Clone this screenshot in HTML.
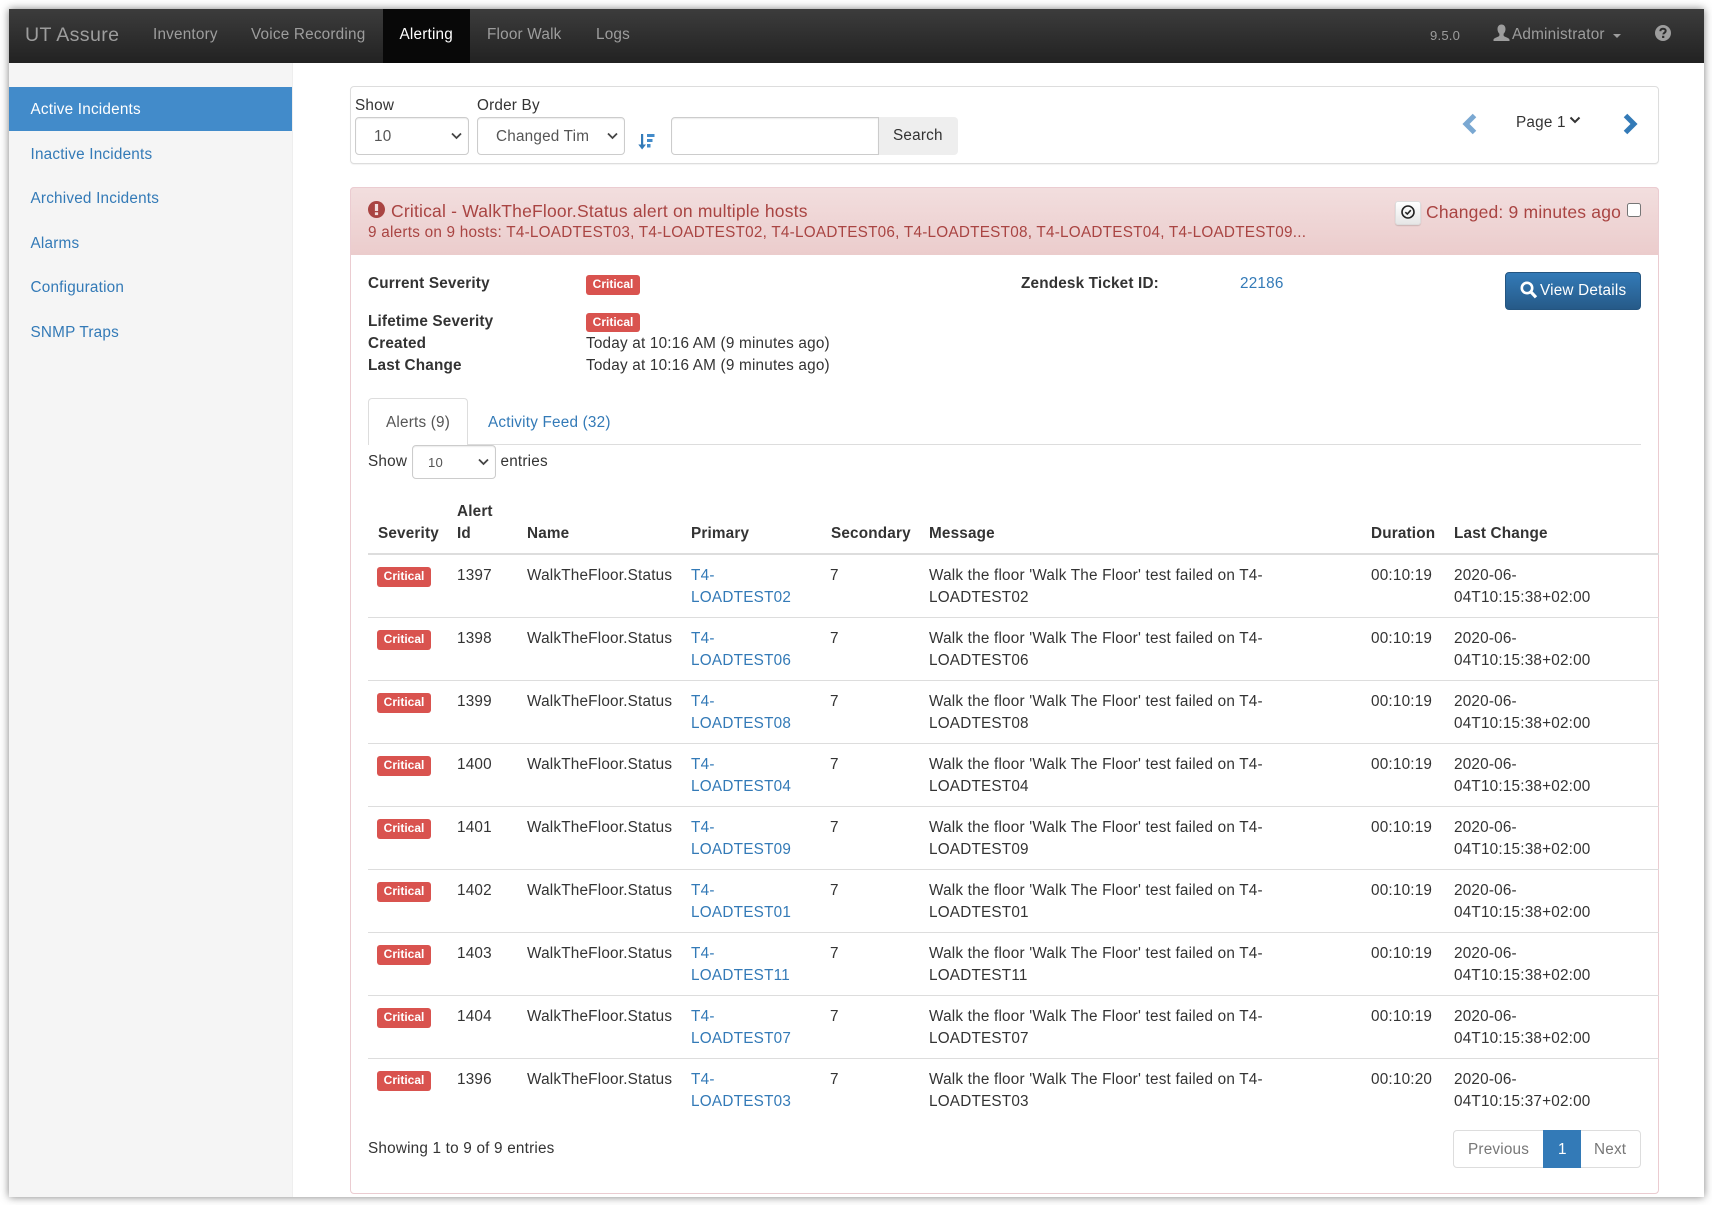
<!DOCTYPE html>
<html lang="en">
<head>
<meta charset="utf-8">
<title>UT Assure</title>
<style>
html,body{margin:0;padding:0;width:1712px;height:1205px;overflow:hidden;background:#fff;}
body{font-family:"Liberation Sans",Arial,sans-serif;font-size:15.3px;letter-spacing:.2px;color:#333;position:relative;}
*{box-sizing:border-box;}
.a,.t{position:absolute;}
.t{white-space:nowrap;line-height:22px;}
a{color:#337ab7;text-decoration:none;}
#app{position:absolute;left:9px;top:9px;width:1695px;height:1188px;background:#fff;box-shadow:0 0 8px rgba(0,0,0,.5);}
#nav{position:absolute;left:9px;top:9px;width:1695px;height:54px;background:linear-gradient(#3c3c3c,#222);}
.n{color:#9d9d9d;top:24px;}
#side{position:absolute;left:9px;top:63px;width:284px;height:1134px;background:#f5f5f5;border-right:1px solid #eee;}
.s{left:30.5px;color:#337ab7;}
.pn{position:absolute;left:350px;top:86px;width:1309px;height:78px;border:1px solid #ddd;border-radius:4px;box-shadow:0 1px 1px rgba(0,0,0,.05);background:#fff;}
select{position:absolute;font-family:"Liberation Sans",Arial,sans-serif;font-size:15.3px;letter-spacing:.2px;color:#555;background:#fff;border:1px solid #ccc;border-radius:4px;margin:0;box-shadow:inset 0 1px 1px rgba(0,0,0,.075);-webkit-appearance:none;appearance:none;}
.chev{position:absolute;pointer-events:none;}
input[type=text]{position:absolute;left:671px;top:117px;width:208px;height:38px;border:1px solid #ccc;border-radius:4px 0 0 4px;background:#fff;box-shadow:inset 0 1px 1px rgba(0,0,0,.075);margin:0;}
#inc{position:absolute;left:350px;top:187px;width:1309px;height:1007px;border:1px solid #ebccd1;border-radius:4px;background:#fff;}
#inch{position:absolute;left:350px;top:187px;width:1309px;height:68px;background:linear-gradient(#f2dede,#ebcccc);border:1px solid #ebccd1;border-bottom:0;border-radius:4px 4px 0 0;}
.r{color:#a94442;}
.b{font-weight:bold;letter-spacing:.17px;}
.badge{position:absolute;background:#d9534f;color:#fff;font-weight:bold;font-size:12px;letter-spacing:0;line-height:18px;height:20px;text-align:center;border-radius:3px;}
.row{position:absolute;left:368px;width:1291px;height:63px;border-bottom:1px solid #ddd;}
.row .t{top:9.6px;}
.row a.t{letter-spacing:.24px;}
.c2{left:89px;}.c3{left:159px;}.c4{left:323px;}.c5{left:462px;}.c6{left:561px;}.c7{left:1003px;}.c8{left:1086px;}
.row .badge{left:9px;top:12px;width:54px;}
.th{font-weight:bold;letter-spacing:.17px;top:523px;}
</style>
</head>
<body>
<div id="app"></div>
<div id="nav"></div>
<div class="t" style="left:25px;top:24px;font-size:19.6px;letter-spacing:.36px;color:#9d9d9d;">UT Assure</div>
<a class="t n" style="left:153px;">Inventory</a>
<a class="t n" style="left:251px;">Voice Recording</a>
<div class="a" style="left:383px;top:9px;width:87px;height:54px;background:#080808;"></div>
<a class="t" style="left:399.5px;top:24px;color:#fff;">Alerting</a>
<a class="t n" style="left:487px;">Floor Walk</a>
<a class="t n" style="left:596px;">Logs</a>
<div class="t" style="left:1430px;top:24.5px;font-size:13.1px;color:#9d9d9d;">9.5.0</div>
<svg class="a" style="left:1493px;top:24px" width="17" height="18" viewBox="0 0 17 18"><path fill="#9d9d9d" d="M8.5 0.5c2.6 0 4 2 4 4.6 0 1.9-.8 3.6-1.9 4.6v1.5c0 .9 1 1.3 2.6 2 1.7.7 3.3 1.4 3.3 2.6V17H.5v-1.2c0-1.2 1.600-1.900 3.300-2.600 1.600-.7 2.600-1.100 2.600-2V9.700C5.300 8.700 4.500 7 4.500 5.100c0-2.600 1.400-4.600 4-4.600z"/></svg>
<a class="t n" style="left:1512px;">Administrator</a>
<div class="a" style="left:1613px;top:34px;border:4.500px solid transparent;border-top-color:#9d9d9d;border-bottom:0;"></div>
<svg class="a" style="left:1655px;top:25px" width="16" height="16" viewBox="0 0 16 16"><circle cx="8" cy="8" r="8" fill="#9d9d9d"/><path d="M5.300 6.200C5.400 4.600 6.500 3.700 8 3.700c1.600 0 2.700.9 2.700 2.200 0 1.800-2.400 1.900-2.400 3.500" fill="none" stroke="#2b2b2b" stroke-width="2"/><rect x="7.100" y="10.800" width="2.200" height="2.200" fill="#2b2b2b"/></svg>

<div id="side"></div>
<div class="a" style="left:9px;top:87px;width:283px;height:44px;background:#428bca;"></div>
<a class="t" style="left:30.5px;top:97px;margin-top:2px;color:#fff;">Active Incidents</a>
<a class="t s" style="top:144px;">Inactive Incidents</a>
<a class="t s" style="top:188px;">Archived Incidents</a>
<a class="t s" style="top:233px;">Alarms</a>
<a class="t s" style="top:277px;">Configuration</a>
<a class="t s" style="top:322px;">SNMP Traps</a>

<div class="pn"></div>
<div class="t" style="left:355px;top:94.5px;">Show</div>
<div class="t" style="left:477px;top:94.5px;">Order By</div>
<select style="left:355px;top:117px;width:114px;height:38px;padding:0 30px 0 18px;"><option>10</option></select>
<svg class="chev" style="left:451px;top:132px" width="11" height="8" viewBox="0 0 11 8"><path d="M1 1.500 5.500 6 10 1.500" fill="none" stroke="#444" stroke-width="1.800"/></svg>
<select style="left:477px;top:117px;width:148px;height:38px;padding:0 35px 0 18px;"><option>Changed Time</option></select>
<svg class="chev" style="left:607px;top:132px" width="11" height="8" viewBox="0 0 11 8"><path d="M1 1.500 5.500 6 10 1.500" fill="none" stroke="#444" stroke-width="1.800"/></svg>
<svg class="a" style="left:638px;top:133px" width="17" height="17" viewBox="0 0 17 17"><path fill="#337ab7" d="M3 1h2.200v10.500H8L4.100 16.500 0.300 11.500H3z"/><path fill="#428bca" d="M9 1h7.500v3H9zM9 6h5.500v3H9zM9 11h3.500v3.500H9z"/></svg>
<input type="text" aria-label="Search">
<div class="a" style="left:879px;top:117px;width:79px;height:38px;background:#eee;border-radius:0 4px 4px 0;"></div>
<div class="t" style="left:893px;top:125px;">Search</div>
<svg class="a" style="left:1461px;top:113px" width="17" height="22" viewBox="0 0 17 22"><path d="M13.500 2.500 5 11l8.500 8.500" fill="none" stroke="#7aa8d2" stroke-width="5"/></svg>
<div class="t" style="left:1516px;top:111.5px;">Page 1</div>
<svg class="a" style="left:1569px;top:115px" width="12" height="10" viewBox="0 0 12 10"><path d="M1.500 2.500 6 7l4.500-4.500" fill="none" stroke="#333" stroke-width="2"/></svg>
<svg class="a" style="left:1622px;top:113px" width="17" height="22" viewBox="0 0 17 22"><path d="M3.500 2.500 12 11l-8.500 8.500" fill="none" stroke="#337ab7" stroke-width="5"/></svg>

<div id="inc"></div>
<div id="inch"></div>
<svg class="a" style="left:368px;top:201px" width="17" height="17" viewBox="0 0 17 17"><circle cx="8.500" cy="8.500" r="8.500" fill="#a94442"/><rect x="6.900" y="3" width="3.200" height="7" fill="#f2dede"/><rect x="6.900" y="11.300" width="3.200" height="2.800" fill="#f2dede"/></svg>
<div class="t r" style="left:391px;top:200px;font-size:17.5px;">Critical - WalkTheFloor.Status alert on multiple hosts</div>
<div class="t r" style="left:368px;top:222px;letter-spacing:.24px;">9 alerts on 9 hosts: T4-LOADTEST03, T4-LOADTEST02, T4-LOADTEST06, T4-LOADTEST08, T4-LOADTEST04, T4-LOADTEST09...</div>
<div class="a" style="left:1395px;top:201px;width:26px;height:24px;background:linear-gradient(#fff,#e6e6e6);border:1px solid #ddd;border-radius:3px;box-shadow:0 1px 1px rgba(0,0,0,.15);"></div>
<svg class="a" style="left:1400px;top:204px" width="16" height="16" viewBox="0 0 16 16"><circle cx="8" cy="8" r="6" fill="none" stroke="#222" stroke-width="1.600"/><path d="M5.300 8.200 7.300 10l3.500-3.800" fill="none" stroke="#222" stroke-width="1.600"/></svg>
<div class="t r" style="left:1426px;top:201px;font-size:17.5px;">Changed: 9 minutes ago</div>
<input type="checkbox" class="a" style="left:1627px;top:203px;width:14px;height:14px;margin:0;">

<div class="t b" style="left:368px;top:272.5px;">Current Severity</div>
<div class="badge" style="left:586px;top:275px;width:54px;">Critical</div>
<div class="t b" style="left:1021px;top:272.5px;">Zendesk Ticket ID:</div>
<a class="t" style="left:1240px;top:272.5px;">22186</a>
<div class="a" style="left:1505px;top:272px;width:136px;height:38px;background:linear-gradient(#337ab7,#265a88);border:1px solid #245580;border-radius:4px;"></div>
<svg class="a" style="left:1520px;top:281px" width="18" height="18" viewBox="0 0 18 18"><circle cx="7" cy="7" r="5.200" fill="none" stroke="#fff" stroke-width="2.600"/><path d="M10.800 10.800 16 16.300" stroke="#fff" stroke-width="3.200"/></svg>
<div class="t" style="left:1540px;top:280px;color:#fff;">View Details</div>

<div class="t b" style="left:368px;top:310.5px;">Lifetime Severity</div>
<div class="badge" style="left:586px;top:313px;width:54px;height:19px;">Critical</div>
<div class="t b" style="left:368px;top:333px;">Created</div>
<div class="t" style="left:586px;top:333px;">Today at 10:16 AM (9 minutes ago)</div>
<div class="t b" style="left:368px;top:355px;">Last Change</div>
<div class="t" style="left:586px;top:355px;">Today at 10:16 AM (9 minutes ago)</div>

<div class="a" style="left:368px;top:444px;width:1273px;height:1px;background:#ddd;"></div>
<div class="a" style="left:368px;top:398px;width:100px;height:47px;background:#fff;border:1px solid #ddd;border-bottom:0;border-radius:4px 4px 0 0;"></div>
<div class="t" style="left:386px;top:412px;color:#555;">Alerts (9)</div>
<a class="t" style="left:488px;top:412px;">Activity Feed (32)</a>
<div class="t" style="left:368px;top:450.5px;">Show</div>
<select style="left:412px;top:445px;width:84px;height:34px;font-size:13.1px;padding:0 24px 0 15px;"><option>10</option></select>
<svg class="chev" style="left:478px;top:458px" width="11" height="8" viewBox="0 0 11 8"><path d="M1 1.500 5.500 6 10 1.500" fill="none" stroke="#444" stroke-width="1.800"/></svg>
<div class="t" style="left:500.500px;top:450.5px;">entries</div>

<div class="t b" style="left:457px;top:500.5px;">Alert</div>
<div class="t th" style="left:378px;">Severity</div>
<div class="t th" style="left:457px;">Id</div>
<div class="t th" style="left:527px;">Name</div>
<div class="t th" style="left:691px;">Primary</div>
<div class="t th" style="left:831px;">Secondary</div>
<div class="t th" style="left:929px;">Message</div>
<div class="t th" style="left:1371px;">Duration</div>
<div class="t th" style="left:1454px;">Last Change</div>
<div class="a" style="left:368px;top:553px;width:1291px;height:2px;background:#ddd;"></div>

<div class="row" style="top:555px;"><div class="badge">Critical</div><div class="t c2">1397</div><div class="t c3">WalkTheFloor.Status</div><a class="t c4">T4-<br>LOADTEST02</a><div class="t c5">7</div><div class="t c6">Walk the floor 'Walk The Floor' test failed on T4-<br>LOADTEST02</div><div class="t c7">00:10:19</div><div class="t c8">2020-06-<br>04T10:15:38+02:00</div></div>
<div class="row" style="top:618px;"><div class="badge">Critical</div><div class="t c2">1398</div><div class="t c3">WalkTheFloor.Status</div><a class="t c4">T4-<br>LOADTEST06</a><div class="t c5">7</div><div class="t c6">Walk the floor 'Walk The Floor' test failed on T4-<br>LOADTEST06</div><div class="t c7">00:10:19</div><div class="t c8">2020-06-<br>04T10:15:38+02:00</div></div>
<div class="row" style="top:681px;"><div class="badge">Critical</div><div class="t c2">1399</div><div class="t c3">WalkTheFloor.Status</div><a class="t c4">T4-<br>LOADTEST08</a><div class="t c5">7</div><div class="t c6">Walk the floor 'Walk The Floor' test failed on T4-<br>LOADTEST08</div><div class="t c7">00:10:19</div><div class="t c8">2020-06-<br>04T10:15:38+02:00</div></div>
<div class="row" style="top:744px;"><div class="badge">Critical</div><div class="t c2">1400</div><div class="t c3">WalkTheFloor.Status</div><a class="t c4">T4-<br>LOADTEST04</a><div class="t c5">7</div><div class="t c6">Walk the floor 'Walk The Floor' test failed on T4-<br>LOADTEST04</div><div class="t c7">00:10:19</div><div class="t c8">2020-06-<br>04T10:15:38+02:00</div></div>
<div class="row" style="top:807px;"><div class="badge">Critical</div><div class="t c2">1401</div><div class="t c3">WalkTheFloor.Status</div><a class="t c4">T4-<br>LOADTEST09</a><div class="t c5">7</div><div class="t c6">Walk the floor 'Walk The Floor' test failed on T4-<br>LOADTEST09</div><div class="t c7">00:10:19</div><div class="t c8">2020-06-<br>04T10:15:38+02:00</div></div>
<div class="row" style="top:870px;"><div class="badge">Critical</div><div class="t c2">1402</div><div class="t c3">WalkTheFloor.Status</div><a class="t c4">T4-<br>LOADTEST01</a><div class="t c5">7</div><div class="t c6">Walk the floor 'Walk The Floor' test failed on T4-<br>LOADTEST01</div><div class="t c7">00:10:19</div><div class="t c8">2020-06-<br>04T10:15:38+02:00</div></div>
<div class="row" style="top:933px;"><div class="badge">Critical</div><div class="t c2">1403</div><div class="t c3">WalkTheFloor.Status</div><a class="t c4">T4-<br>LOADTEST11</a><div class="t c5">7</div><div class="t c6">Walk the floor 'Walk The Floor' test failed on T4-<br>LOADTEST11</div><div class="t c7">00:10:19</div><div class="t c8">2020-06-<br>04T10:15:38+02:00</div></div>
<div class="row" style="top:996px;"><div class="badge">Critical</div><div class="t c2">1404</div><div class="t c3">WalkTheFloor.Status</div><a class="t c4">T4-<br>LOADTEST07</a><div class="t c5">7</div><div class="t c6">Walk the floor 'Walk The Floor' test failed on T4-<br>LOADTEST07</div><div class="t c7">00:10:19</div><div class="t c8">2020-06-<br>04T10:15:38+02:00</div></div>
<div class="row" style="top:1059px;border-bottom:0;"><div class="badge">Critical</div><div class="t c2">1396</div><div class="t c3">WalkTheFloor.Status</div><a class="t c4">T4-<br>LOADTEST03</a><div class="t c5">7</div><div class="t c6">Walk the floor 'Walk The Floor' test failed on T4-<br>LOADTEST03</div><div class="t c7">00:10:20</div><div class="t c8">2020-06-<br>04T10:15:37+02:00</div></div>

<div class="t" style="left:368px;top:1138px;">Showing 1 to 9 of 9 entries</div>
<div class="a" style="left:1453px;top:1130px;width:188px;height:38px;border:1px solid #ddd;border-radius:4px;background:#fff;"></div>
<div class="a" style="left:1543px;top:1130px;width:38px;height:38px;background:#337ab7;"></div>
<div class="t" style="left:1468px;top:1139px;color:#777;">Previous</div>
<div class="t" style="left:1558px;top:1139px;color:#fff;">1</div>
<div class="t" style="left:1594px;top:1139px;color:#777;">Next</div>
</body>
</html>
